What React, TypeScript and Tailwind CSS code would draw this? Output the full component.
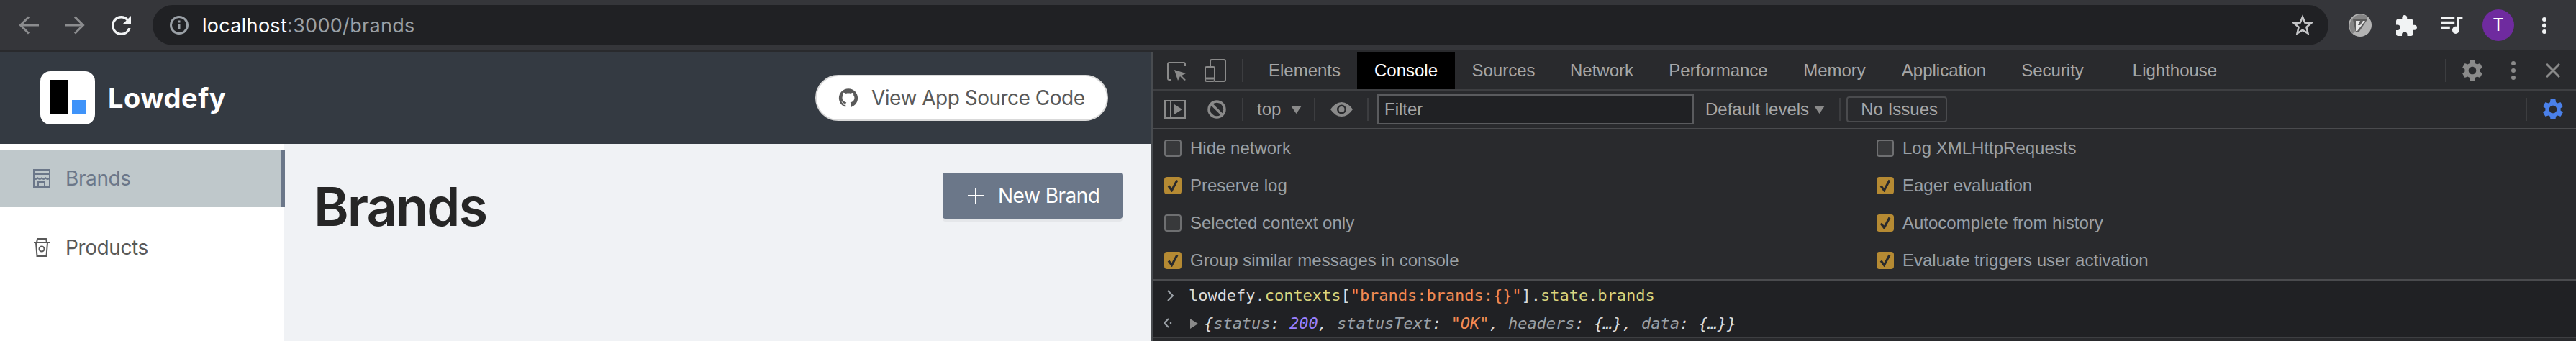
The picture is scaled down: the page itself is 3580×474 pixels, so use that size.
import React from "react";
import { AiFillGithub } from "react-icons/ai";

const GEAR =
  "M19.14 12.94c.04-.3.06-.61.06-.94 0-.32-.02-.64-.07-.94l2.03-1.58c.18-.14.23-.41.12-.61l-1.92-3.32c-.12-.22-.37-.29-.59-.22l-2.39.96c-.5-.38-1.03-.7-1.62-.94l-.36-2.54c-.04-.24-.24-.41-.48-.41h-3.84c-.24 0-.43.17-.47.41l-.36 2.54c-.59.24-1.13.57-1.62.94l-2.39-.96c-.22-.08-.47 0-.59.22L2.74 8.87c-.12.21-.08.47.12.61l2.03 1.58c-.05.3-.09.63-.09.94s.02.64.07.94l-2.03 1.58c-.18.14-.23.41-.12.61l1.92 3.32c.12.22.37.29.59.22l2.39-.96c.5.38 1.03.7 1.62.94l.36 2.54c.05.24.24.41.48.41h3.84c.24 0 .44-.17.47-.41l.36-2.54c.59-.24 1.13-.56 1.62-.94l2.39.96c.22.08.47 0 .59-.22l1.92-3.32c.12-.22.07-.47-.12-.61l-2.01-1.58zM12 15.6c-1.98 0-3.6-1.62-3.6-3.6s1.62-3.6 3.6-3.6 3.6 1.62 3.6 3.6-1.62 3.6-3.6 3.6z";

function Gear({ color }: { color: string }) {
  return (
    <svg width="28" height="28" viewBox="2.5 2.5 19 19" fill={color} className="shrink-0">
      <path d={GEAR} />
    </svg>
  );
}

function Sep() {
  return <div className="w-[2px] h-[32px] bg-[#3c3d40] shrink-0" />;
}

function Dots({ color, step }: { color: string; step: number }) {
  return (
    <svg width="8" height={step * 2 + 6} className="shrink-0" fill={color}>
      <circle cx="4" cy="3" r="3" />
      <circle cx="4" cy={3 + step} r="3" />
      <circle cx="4" cy={3 + step * 2} r="3" />
    </svg>
  );
}

function ChromeToolbar() {
  return (
    <div className="h-[72px] shrink-0 bg-[#35363a] border-b-2 border-[#292a2d] flex items-center font-['Inter',sans-serif]">
      <svg width="28" height="26" viewBox="0 0 28 26" fill="none" stroke="#8b8c8e" strokeWidth="3" className="ml-[26px] shrink-0">
        <path d="M28 13H3M14 1.5 2.5 13 14 24.5" />
      </svg>
      <svg width="28" height="26" viewBox="0 0 28 26" fill="none" stroke="#8b8c8e" strokeWidth="3" className="ml-[36px] shrink-0">
        <path d="M0 13h25M14 1.5 25.500 13 14 24.500" />
      </svg>
      <svg width="27" height="27" viewBox="4 4 16 16" fill="#f1f3f4" className="ml-[37px] shrink-0">
        <path d="M17.65 6.35A7.958 7.958 0 0012 4c-4.420 0-7.990 3.580-7.990 8s3.570 8 7.990 8c3.730 0 6.840-2.550 7.730-6h-2.080A5.990 5.990 0 0112 18c-3.310 0-6-2.690-6-6s2.690-6 6-6c1.660 0 3.140.690 4.220 1.780L13 11h7V4l-2.350 2.350z" />
      </svg>
      <div className="ml-[30px] w-[3024px] h-[56px] rounded-full bg-[#202124] flex items-center shrink-0">
        <svg width="26" height="26" viewBox="0 0 26 26" fill="none" className="ml-[24px] shrink-0">
          <circle cx="13" cy="13" r="11.500" stroke="#9aa0a6" strokeWidth="3" />
          <path d="M13 11.500v7.500M13 6.500v3" stroke="#9aa0a6" strokeWidth="3" />
        </svg>
        <span className="ml-[19px] text-[27px] tracking-[0.3px] leading-none whitespace-nowrap text-white">
          localhost<span className="text-[#9aa0a6]">:3000/brands</span>
        </span>
        <svg width="30" height="30" viewBox="0 0 30 30" fill="none" stroke="#c4c5c7" strokeWidth="2.600" className="ml-auto mr-[21px] shrink-0">
          <path d="M15 3.500 18.300 11.400 27 12.100 20.400 17.800 22.400 26.300 15 21.800 7.600 26.300 9.600 17.800 3 12.100 11.700 11.400Z" strokeLinejoin="miter" />
        </svg>
      </div>
      <svg width="32" height="32" viewBox="0 0 32 32" className="ml-[28px] shrink-0">
        <circle cx="16" cy="16" r="16" fill="#b3b3b3" />
        <path d="M5.500 28 A16 16 0 0 1 27 4.500Z" fill="#858585" />
        <path d="M6 8h20L14 26h-4Z" fill="#5c5c5c" />
        <path d="M10 10h6l-3 6h3l4-6h3L12 24h-2Z" fill="#e6e6e6" />
      </svg>
      <svg width="29" height="29" viewBox="2 1 21 21" fill="#f1f3f4" className="ml-[34px] shrink-0">
        <path d="M20.500 11H19V7c0-1.100-.9-2-2-2h-4V3.500C13 2.120 11.880 1 10.500 1S8 2.120 8 3.500V5H4c-1.100 0-1.990.9-1.990 2v3.800H3.500c1.490 0 2.700 1.210 2.700 2.700s-1.210 2.700-2.700 2.700H2V20c0 1.100.9 2 2 2h3.800v-1.500c0-1.490 1.210-2.700 2.700-2.700 1.490 0 2.700 1.210 2.700 2.700V22H17c1.100 0 2-.9 2-2v-4h1.500c1.380 0 2.500-1.120 2.500-2.500S21.880 11 20.500 11z" />
      </svg>
      <svg width="32" height="24" viewBox="3 6 20 14" fill="#f1f3f4" preserveAspectRatio="none" className="ml-[33px] shrink-0">
        <path d="M15 6H3v2h12V6zm0 4H3v2h12v-2zM3 16h8v-2H3v2zM17 6v8.180c-.31-.11-.65-.18-1-.18-1.660 0-3 1.340-3 3s1.340 3 3 3 3-1.340 3-3V8h3V6h-5z" />
      </svg>
      <div className="ml-[26px] w-[44px] h-[44px] rounded-full bg-[#6f2b9f] flex items-center justify-center text-white text-[24px] leading-none shrink-0">
        T
      </div>
      <div className="ml-[38px] shrink-0 flex">
        <Dots color="#f1f3f4" step={8.500} />
      </div>
    </div>
  );
}

function AppHeader() {
  return (
    <div className="h-[128px] bg-[#343a42] flex items-center justify-between pl-[56px] pr-[60px]">
      <div className="flex items-center">
        <div className="w-[76px] h-[74px] bg-white rounded-[14px] flex items-end gap-[5px] pl-[13px] pb-[14px] shrink-0">
          <div className="w-[26px] h-[48px] bg-black" />
          <div className="w-[20px] h-[20px] bg-[#3f93f9]" />
        </div>
        <span className="ml-[18px] text-[38px] leading-none font-bold text-white tracking-[0.5px]">Lowdefy</span>
      </div>
      <div className="w-[407px] h-[64px] bg-white rounded-full border-2 border-[#d9d9d9] flex items-center pl-[29px] text-[#595959] text-[28px] tracking-[-0.5px] leading-none">
        <AiFillGithub size={30} className="shrink-0" />
        <span className="ml-[17px] whitespace-nowrap">View App Source Code</span>
      </div>
    </div>
  );
}

function Sidebar() {
  return (
    <div className="w-[394px] shrink-0 bg-white pt-2 text-[28px] tracking-[-0.4px] leading-none">
      <div className="relative w-[396px] h-[80px] bg-[#bfc8cb] border-r-[6px] border-[#6b7789] flex items-center pl-[46px] text-[#6b7789]">
        <svg width="24" height="26" viewBox="0 0 24 26" fill="none" stroke="currentColor" strokeWidth="2" className="shrink-0">
          <path d="M1 1h22v24H1z" />
          <path d="M1 7h22" />
          <path d="M1 12.500q2.750 3 5.500 0q2.750 3 5.500 0q2.750 3 5.500 0q2.750 3 5.500 0" />
          <path d="M7 25v-7h9v7" />
        </svg>
        <span className="ml-[21px]">Brands</span>
      </div>
      <div className="h-[32px]" />
      <div className="h-[48px] flex items-center pl-[47px] text-[#595959]">
        <svg width="22" height="26" viewBox="0 0 22 26" fill="none" stroke="currentColor" strokeWidth="2" className="shrink-0">
          <path d="M0 6h22M4 6l1-5h12l1 5M3 6l1.500 19h13L19 6" />
          <circle cx="11" cy="15" r="3.500" />
        </svg>
        <span className="ml-[22px]">Products</span>
      </div>
    </div>
  );
}

function Main() {
  return (
    <div className="flex-1 bg-[#f0f2f5] flex justify-between items-start pl-[42px] pr-[40px] pt-[40px]">
      <h1 className="mt-[9px] text-[74px] leading-[76px] font-semibold text-[#262626] tracking-[-2px]">Brands</h1>
      <div className="w-[250px] h-[64px] bg-[#6b7789] rounded-[4px] shadow-[0_4px_0_rgba(0,0,0,0.045)] flex items-center pl-[35px] text-white text-[28px] tracking-[-0.5px] leading-none">
        <svg width="22" height="22" viewBox="0 0 22 22" stroke="currentColor" strokeWidth="2" className="shrink-0">
          <path d="M0 11h22M11 0v22" />
        </svg>
        <span className="ml-[20px] whitespace-nowrap">New Brand</span>
      </div>
    </div>
  );
}

const TABS = [
  { t: "Elements", c: "w-[146px] text-[#a6a6a6]" },
  { t: "Console", c: "w-[136px] bg-black text-white" },
  { t: "Sources", c: "w-[135px] text-[#a6a6a6]" },
  { t: "Network", c: "w-[138px] text-[#a6a6a6]" },
  { t: "Performance", c: "w-[186px] text-[#a6a6a6]" },
  { t: "Memory", c: "w-[137px] text-[#a6a6a6]" },
  { t: "Application", c: "w-[167px] text-[#a6a6a6]" },
  { t: "Security", c: "w-[135px] text-[#a6a6a6]" },
  { t: "Lighthouse", c: "w-[205px] text-[#a6a6a6]" },
];

function TabsRow() {
  return (
    <div className="h-[54px] shrink-0 border-b-2 border-[#3e3f42] flex items-center">
      <svg width="26" height="26" viewBox="0 0 26 26" fill="none" className="ml-5 mt-[2px] shrink-0">
        <path d="M6 25H3q-2 0-2-2V3q0-2 2-2h20q2 0 2 2v3" stroke="#8a8a8a" strokeWidth="2" />
        <path d="M10 11l16 5-6 3 6 6-2 1-6-6-3 6Z" fill="#8a8a8a" />
      </svg>
      <svg width="30" height="32" viewBox="0 0 30 32" fill="none" stroke="#8a8a8a" strokeWidth="2" className="ml-[26px] shrink-0">
        <path d="M8 10V3q0-2 2-2h17q2 0 2 2v26q0 2-2 2H14" />
        <rect x="1" y="11" width="13" height="20" rx="2" />
        <path d="M1 27h13" strokeWidth="3" />
      </svg>
      <div className="ml-[22px]"><Sep /></div>
      <div className="ml-3 h-[52px] flex text-[24px] leading-none">
        {TABS.map((x) => (
          <div key={x.t} className={"h-full flex items-center justify-center shrink-0 " + x.c}>{x.t}</div>
        ))}
      </div>
      <div className="ml-auto flex items-center pr-[22px]">
        <Sep />
        <div className="ml-[22px]"><Gear color="#8a8a8a" /></div>
        <div className="ml-[39px]"><Dots color="#8a8a8a" step={10} /></div>
        <svg width="20" height="20" viewBox="0 0 20 20" stroke="#8a8a8a" strokeWidth="3" className="ml-[41px] shrink-0">
          <path d="M1 1l18 18M19 1 1 19" />
        </svg>
      </div>
    </div>
  );
}

function Tri({ className }: { className: string }) {
  return (
    <svg width="15" height="11" viewBox="0 0 15 11" fill="#8a8a8a" className={className}>
      <path d="M0 0h15L7.500 11Z" />
    </svg>
  );
}

function ConsoleBar() {
  return (
    <div className="h-[54px] shrink-0 border-b-2 border-[#4a4b4e] flex items-center text-[#a6a6a6] text-[24px] leading-none">
      <svg width="30" height="26" viewBox="0 0 30 26" fill="none" stroke="#8a8a8a" strokeWidth="2" className="ml-4 shrink-0">
        <rect x="1" y="1" width="28" height="24" />
        <path d="M9 1v24" />
        <path d="M14 6l11 7-11 7Z" fill="#8a8a8a" stroke="none" />
      </svg>
      <svg width="26" height="26" viewBox="0 0 26 26" fill="none" stroke="#8a8a8a" strokeWidth="3.500" className="ml-[30px] shrink-0">
        <circle cx="13" cy="13" r="11" />
        <path d="M5 5l16 16" />
      </svg>
      <div className="ml-[22px]"><Sep /></div>
      <span className="ml-[19px] w-[34px] shrink-0">top</span>
      <Tri className="ml-[13px] shrink-0" />
      <div className="ml-[17px]"><Sep /></div>
      <svg width="31" height="20" viewBox="0 0 31 20" className="ml-[21px] shrink-0">
        <path d="M0 10Q7 0 15.500 0T31 10Q24 20 15.500 20T0 10Z" fill="#8a8a8a" />
        <circle cx="15.500" cy="10" r="6.500" fill="#292a2d" />
        <circle cx="15.500" cy="10" r="4" fill="#8a8a8a" />
      </svg>
      <div className="ml-[20px]"><Sep /></div>
      <div className="ml-3 w-[440px] h-[42px] bg-[#202124] border-2 border-[#5a5b5e] flex items-center pl-2 shrink-0">Filter</div>
      <span className="ml-4 w-[142px] whitespace-nowrap shrink-0">Default levels</span>
      <Tri className="ml-[9px] shrink-0" />
      <div className="ml-5"><Sep /></div>
      <div className="ml-2 w-[140px] h-[36px] rounded-[4px] border-2 border-[#4a4b4e] flex items-center justify-end pr-[11px] whitespace-nowrap shrink-0">No Issues</div>
      <div className="ml-auto flex items-center pr-[18px]">
        <Sep />
        <div className="ml-[22px]"><Gear color="#4a80ea" /></div>
      </div>
    </div>
  );
}

function Check({ label, on }: { label: string; on?: boolean }) {
  return (
    <div className="h-[52px] flex items-center">
      {on ? (
        <div className="w-6 h-6 rounded-[4px] bg-[#b58a33] flex items-center justify-center shrink-0">
          <svg width="16" height="18" viewBox="0 0 16 18" fill="none" stroke="#292a2d" strokeWidth="3.200">
            <path d="M2 9.500l4.500 6L14 1.500" />
          </svg>
        </div>
      ) : (
        <div className="w-6 h-6 rounded-[4px] bg-[#38393b] border-2 border-[#6e6f71] shrink-0" />
      )}
      <span className="ml-3 whitespace-nowrap text-[#9aa0a6] text-[24px] leading-none">{label}</span>
    </div>
  );
}

function Settings() {
  return (
    <div className="h-[210px] shrink-0 border-b-2 border-[#4a4b4e] flex pl-4">
      <div className="w-[990px] shrink-0">
        <Check label="Hide network" />
        <Check label="Preserve log" on />
        <Check label="Selected context only" />
        <Check label="Group similar messages in console" on />
      </div>
      <div>
        <Check label="Log XMLHttpRequests" />
        <Check label="Eager evaluation" on />
        <Check label="Autocomplete from history" on />
        <Check label="Evaluate triggers user activation" on />
      </div>
    </div>
  );
}

function ConsoleOut() {
  const mono = "font-['DejaVu_Sans_Mono',monospace] text-[22px] leading-none tracking-[-0.03px] whitespace-pre";
  return (
    <div className={"h-[80px] shrink-0 bg-[#202124] border-b-2 border-[#3e3f42] " + mono}>
      <div className="h-[41px] flex items-center">
        <svg width="10" height="16" viewBox="0 0 10 16" fill="none" stroke="#9aa0a6" strokeWidth="2.200" className="ml-5 shrink-0">
          <path d="M1 1l7 7-7 7" />
        </svg>
        <span className="ml-5 text-[#dcdcdc]">
          lowdefy.<span className="text-[#d9d67f]">contexts</span>[<span className="text-[#f28b54]">"brands:brands:{"{}"}"</span>].<span className="text-[#d9d67f]">state</span>.<span className="text-[#d9d67f]">brands</span>
        </span>
      </div>
      <div className="h-[37px] flex items-center">
        <svg width="12" height="16" viewBox="0 0 12 16" fill="none" stroke="#9aa0a6" strokeWidth="2.200" className="ml-[15px] shrink-0">
          <path d="M7 1 1 7l6 6" />
          <circle cx="10" cy="7" r="1.300" fill="#9aa0a6" stroke="none" />
        </svg>
        <svg width="11" height="14" viewBox="0 0 11 14" fill="#8a8a8a" className="ml-[25px] shrink-0">
          <path d="M0 0l11 7-11 7Z" />
        </svg>
        <span className="ml-[8px] italic text-[#dcdcdc]">
          {"{"}<span className="text-[#9aa0a6]">status</span>: <span className="text-[#9980ff]">200</span>, <span className="text-[#9aa0a6]">statusText</span>: <span className="text-[#f28b54]">"OK"</span>, <span className="text-[#9aa0a6]">headers</span>: {"{…}"}, <span className="text-[#9aa0a6]">data</span>: {"{…}}"}
        </span>
      </div>
    </div>
  );
}

export default function App() {
  return (
    <div className="w-[3580px] h-[474px] overflow-hidden flex flex-col bg-[#292a2d]">
      <ChromeToolbar />
      <div className="flex-1 flex min-h-0">
        <div className="w-[1600px] shrink-0 flex flex-col font-['Inter',sans-serif]">
          <AppHeader />
          <div className="flex-1 flex min-h-0">
            <Sidebar />
            <Main />
          </div>
        </div>
        <div className="flex-1 flex flex-col bg-[#292a2d] border-l-2 border-[#494c50] font-['Liberation_Sans',sans-serif]">
          <TabsRow />
          <ConsoleBar />
          <Settings />
          <ConsoleOut />
        </div>
      </div>
    </div>
  );
}
